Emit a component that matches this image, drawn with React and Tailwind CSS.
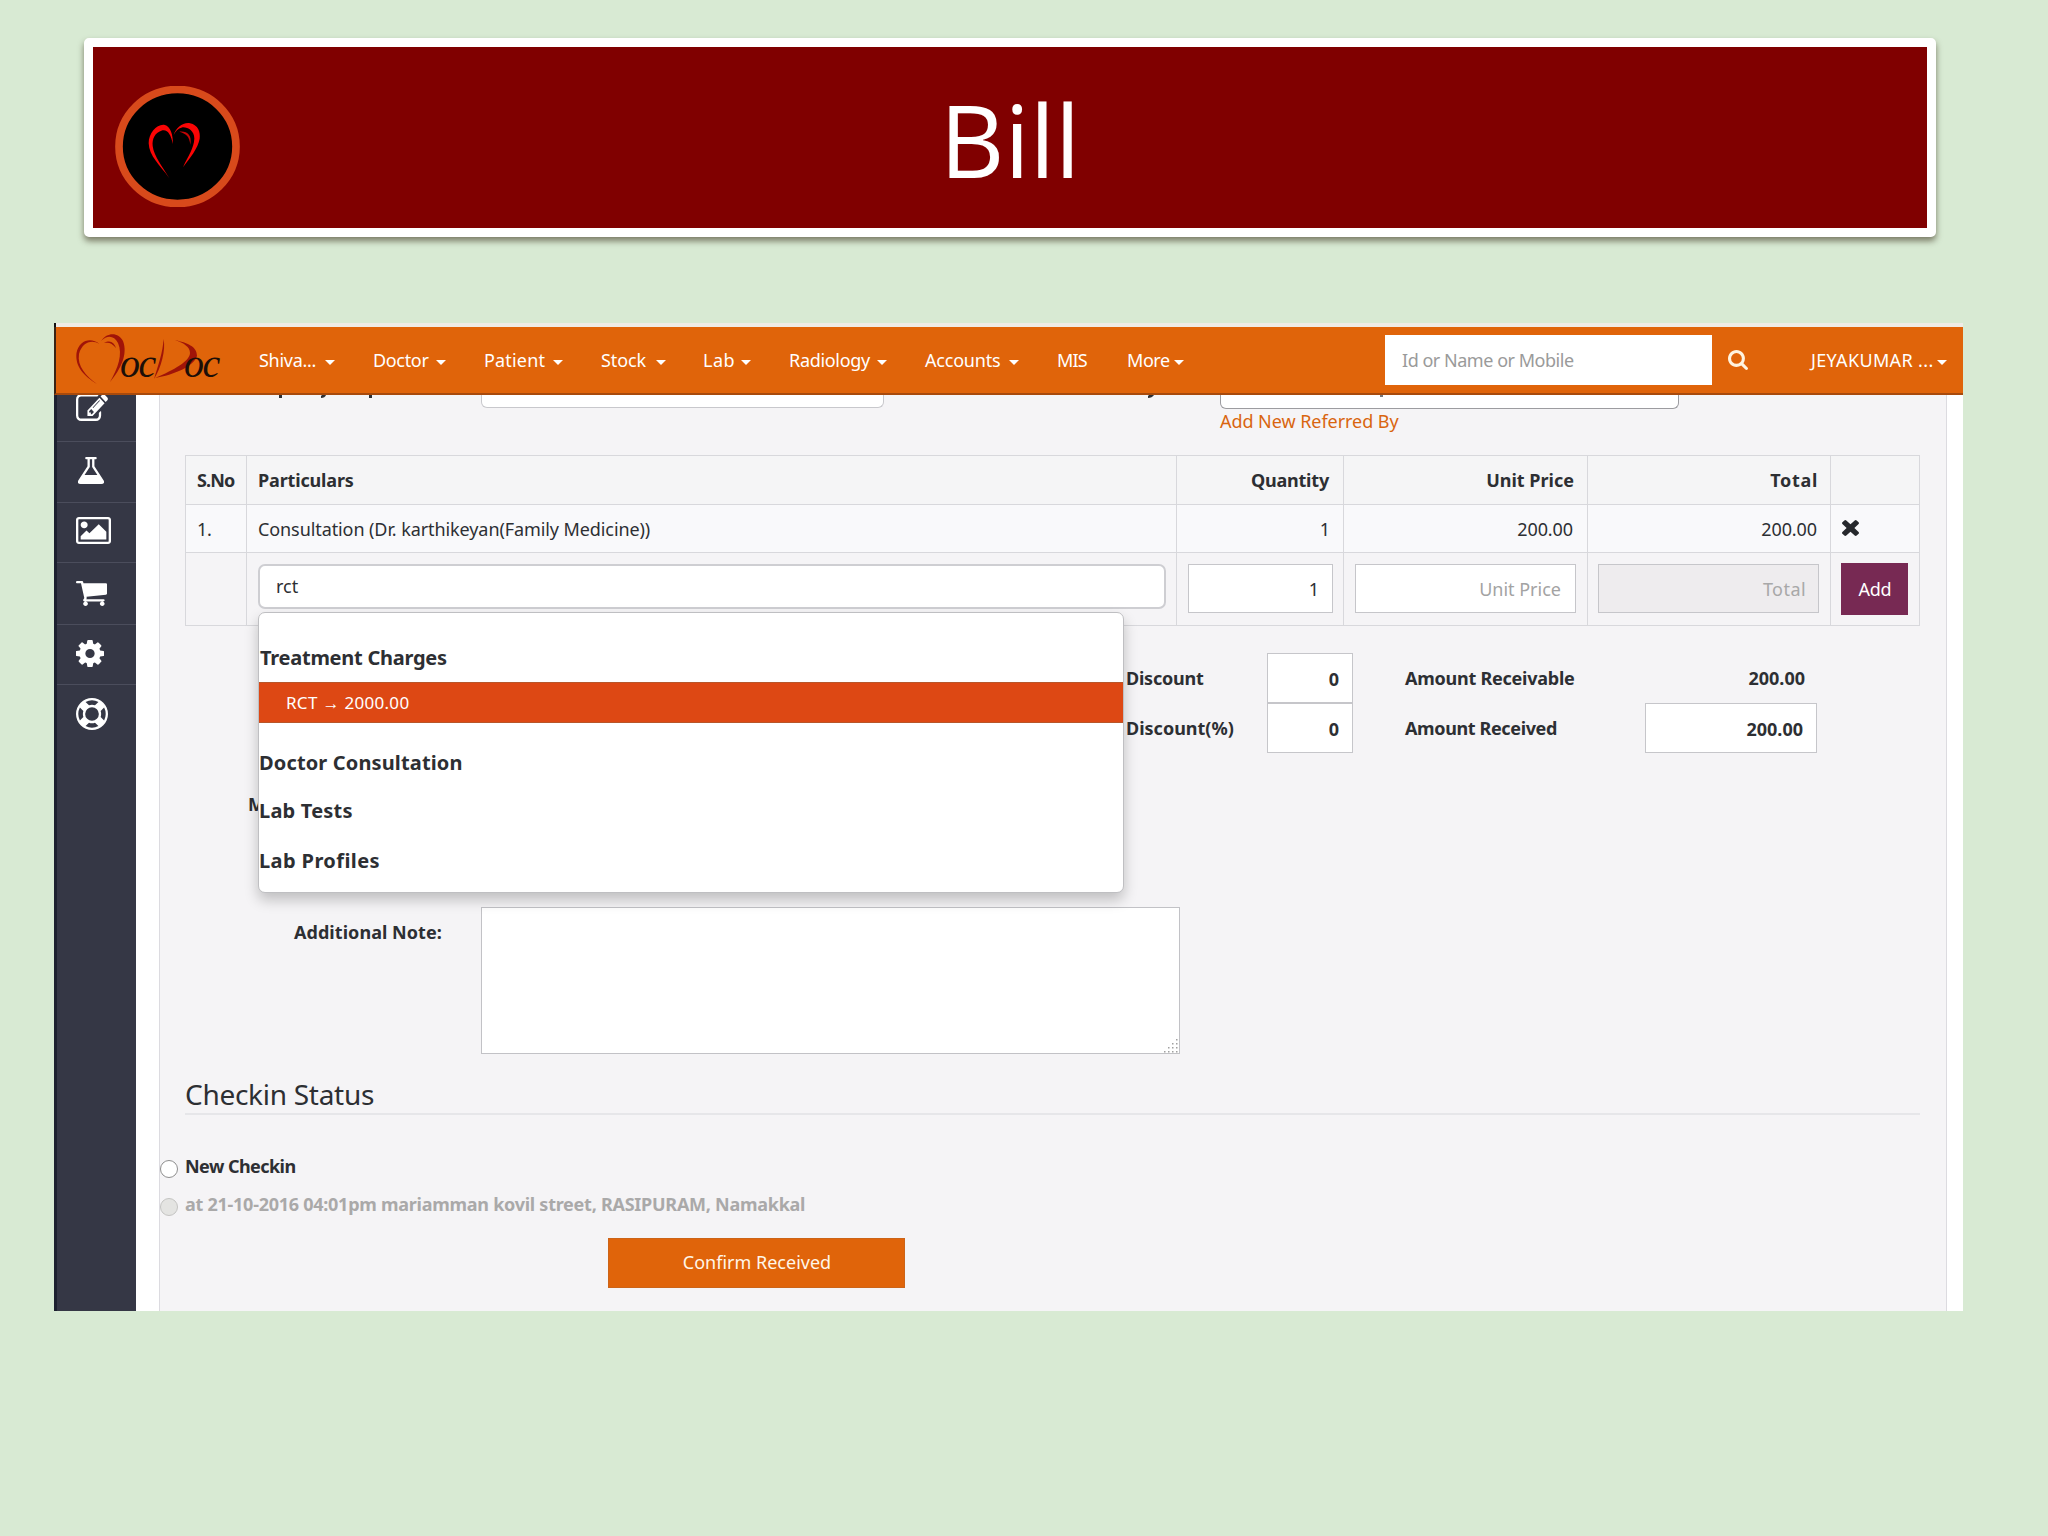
import React, { useState } from 'react';

const navItems = [
    { label: 'Shiva...', box: 'w-[76px] tracking-[-0.29px]', caret: true },
    { label: 'Doctor', box: 'ml-[38px] w-[73px] tracking-[-0.33px]', caret: true },
    { label: 'Patient', box: 'ml-[38px] w-[79px] tracking-[0.17px]', caret: true },
    { label: 'Stock', box: 'ml-[38px] w-[65px] tracking-[-0.1px]', caret: true },
    { label: 'Lab', box: 'ml-[37px] w-[48px] tracking-[0.5px]', caret: true },
    { label: 'Radiology', box: 'ml-[38px] w-[98px] tracking-[-0.31px]', caret: true },
    { label: 'Accounts', box: 'ml-[38px] w-[94px] tracking-[-0.2px]', caret: true },
    { label: 'MIS', box: 'ml-[38px] w-[33px] tracking-[-0.8px]', caret: false },
    { label: 'More', box: 'ml-[37px] w-[57px] tracking-[-0.43px]', caret: true },
];

const sideItems = [
    {
        name: 'edit',
        cell: 'h-[47px] border-b',
        icon: '-mt-[1px] w-[32px] h-[27px]',
        viewBox: '0 128 1792 1408',
        d: 'M888 1184l116-116-152-152-116 116v56h96v96h56zm440-720q-16-16-33 1l-350 350q-17 17-1 33t33-1l350-350q17-17 1-33zm80 594v190q0 119-84.5 203.5t-203.5 84.5h-832q-119 0-203.5-84.5t-84.5-203.5v-832q0-119 84.5-203.5t203.5-84.5h832q63 0 117 25 15 7 18 23 3 17-9 29l-49 49q-14 14-32 8-23-6-45-6h-832q-66 0-113 47t-47 113v832q0 66 47 113t113 47h832q66 0 113-47t47-113v-126q0-13 9-22l64-64q15-15 35-7t20 29zm-96-738l288 288-672 672h-288v-288zm444 132l-92 92-288-288 92-92q28-28 68-28t68 28l152 152q28 28 28 68t-28 68z',
    },
    {
        name: 'lab',
        cell: 'h-[61px] border-b',
        icon: 'mt-[15px] ml-[2px] w-[26px] h-[27px]',
        viewBox: '113 128 1442 1536',
        d: 'M1527 1447q56 89 21.5 153t-140.5 64h-1152q-106 0-140.5-64t21.5-153l503-793v-399h-64q-26 0-45-19t-19-45 19-45 45-19h512q26 0 45 19t19 45-19 45-45 19h-64v399zm-779-725l-272 429h712l-272-429-20-31v-436h-128v436z',
    },
    {
        name: 'images',
        cell: 'h-[60px] border-b',
        icon: 'mt-[14px] w-[35px] h-[27px]',
        viewBox: '-64 128 1920 1536',
        d: 'M576 576q0 80-56 136t-136 56-136-56-56-136 56-136 136-56 136 56 56 136zm1024 384v448h-1408v-192l320-320 160 160 512-512zm96-704h-1600q-13 0-22.5 9.5t-9.5 22.5v1216q0 13 9.5 22.5t22.5 9.5h1600q13 0 22.5-9.5t9.5-22.5v-1216q0-13-9.5-22.5t-22.5-9.5zm160 32v1216q0 66-47 113t-113 47h-1600q-66 0-113-47t-47-113v-1216q0-66 47-113t113-47h1600q66 0 113 47t47 113z',
    },
    {
        name: 'cart',
        cell: 'h-[62px] border-b',
        icon: 'mt-[18px] w-[31px] h-[25px]',
        viewBox: '64 256 1664 1408',
        d: 'M704 1536q0 52-38 90t-90 38-90-38-38-90 38-90 90-38 90 38 38 90zm896 0q0 52-38 90t-90 38-90-38-38-90 38-90 90-38 90 38 38 90zm128-1088v512q0 24-16.5 42.5t-40.5 21.5l-1044 122q13 60 13 70 0 16-24 64h920q26 0 45 19t19 45-19 45-45 19h-1024q-26 0-45-19t-19-45q0-11 8-31.5t16-36 21.5-40 15.5-29.5l-177-823h-204q-26 0-45-19t-19-45 19-45 45-19h256q16 0 28.5 6.5t19.5 15.5 13 24.5 8 26 5.5 29.5 4.5 26h1201q26 0 45 19t19 45z',
    },
    {
        name: 'settings',
        cell: 'h-[60px] border-b',
        icon: 'mt-[15px] w-[28px] h-[27px]',
        viewBox: '0 128 1536 1536',
        d: 'M1024 896q0-106-75-181t-181-75-181 75-75 181 75 181 181 75 181-75 75-181zm512-109v222q0 12-8 23t-20 13l-185 28q-19 54-39 91 35 50 107 138 10 12 10 25t-9 23q-27 37-99 108t-94 71q-12 0-26-9l-138-108q-44 23-91 38-16 136-29 186-7 28-36 28h-222q-14 0-24.5-8.5t-11.5-21.5l-28-184q-49-16-90-37l-141 107q-10 9-25 9-14 0-25-11-126-114-165-168-7-10-7-23 0-12 8-23 15-21 51-66.5t54-70.5q-27-50-41-99l-183-27q-13-2-21-12.5t-8-23.5v-222q0-12 8-23t19-13l186-28q14-46 39-92-40-57-107-138-10-12-10-24 0-10 9-23 26-36 98.5-107.5t94.5-71.5q13 0 26 10l138 107q44-23 91-38 16-136 29-186 7-28 36-28h222q14 0 24.5 8.5t11.5 21.5l28 184q49 16 90 37l142-107q9-9 24-9 13 0 25 10 129 119 165 170 7 8 7 22 0 12-8 23-15 21-51 66.5t-54 70.5q26 50 41 98l183 28q13 2 21 12.5t8 23.5z',
    },
    {
        name: 'help',
        cell: 'grow',
        icon: 'mt-[13px] w-[32px] h-[32px]',
        viewBox: '0 0 1792 1792',
        d: 'M896 0q182 0 348 71t286 191 191 286 71 348-71 348-191 286-286 191-348 71-348-71-286-191-191-286-71-348 71-348 191-286 286-191 348-71zm0 128q-190 0-361 90l194 194q82-28 167-28t167 28l194-194q-171-90-361-90zm-678 1129l194-194q-28-82-28-167t28-167l-194-194q-90 171-90 361t90 361zm678 407q190 0 361-90l-194-194q-82 28-167 28t-167-28l-194 194q171 90 361 90zm0-384q159 0 271.5-112.5t112.5-271.5-112.5-271.5-271.5-112.5-271.5 112.5-112.5 271.5 112.5 271.5 271.5 112.5zm484-217l194 194q90-171 90-361t-90-361l-194 194q28 82 28 167t-28 167z',
    },
];

function Caret() {
    return <span className="mt-[4px] border-x-[5px] border-t-[5px] border-x-transparent border-t-white"></span>;
}

function TitleBanner() {
    return (
        <header className="mt-[38px] ml-[84px] w-[1852px] h-[199px] rounded-[5px] bg-white border-[9px] border-white shadow-[0_4px_6px_rgba(60,50,30,0.6)]">
            <div className="relative h-full bg-[#800000] flex items-center justify-center">
                <svg className="absolute left-[22px] top-[39px] w-[125px] h-[121px]" viewBox="195 197 375 365" preserveAspectRatio="none">
                    <ellipse cx="382.5" cy="379.5" rx="175.5" ry="172" fill="#000" stroke="#d84a1b" strokeWidth="23" />
                    <path fill="#fb0505" d="M358 475C330 436 297 408 296 370C296 338 320 312 342 314C362 318 369 345 369 372C362 342 352 326 334 332C315 338 306 356 308 378C312 410 338 440 358 475Z" />
                    <path fill="#fb0505" d="M371 345C378 322 398 306 420 309C444 314 452 335 449 356C444 385 420 414 399 442C414 408 432 385 433 355C433 332 412 320 396 322C384 325 376 333 371 345Z" />
                    <path fill="#c40404" d="M388 335C410 332 427 345 421 374C418 348 408 341 388 335Z" />
                </svg>
                <h1 className="font-['Open_Sans',sans-serif] text-[100px] leading-none text-white pt-[2px]">Bill</h1>
            </div>
        </header>
    );
}

function Logo() {
    return (
        <div className="relative w-[203px] h-full font-['Liberation_Serif',serif] italic text-[40px] leading-[48px] text-[#1c0f08]">
            <svg className="absolute left-[14px] top-0 w-[160px] h-[66px]" viewBox="70 327 160 66">
                <path fill="#a01408" d="M99.5 344C91 339 82 343 79 354C77 366 86 376 97 384C84 376 75 367 76.500 353C79 340 91 337 99.500 344Z" />
                <path fill="#a01408" d="M101 341C108 331 119 333 123 341C128 354 121 369 110 382C118 368 123 354 118 343C114 335 107 335 101 341Z" />
                <path fill="#a01408" d="M104 343C110 340 114 342 116 348C112 343 109 342 104 343Z" />
                <path fill="#a01408" d="M163.500 339C166 350 161 368 154 379C158 366 163 352 163.500 339Z" />
                <path fill="#a01408" d="M175 340C187 343 197 346 197 356C194 366 174 375 155 378C174 370 190 361 190 353C190 347 184 343 175 340Z" />
            </svg>
            <span className="absolute left-[64px] top-[13px] tracking-[-1.5px]">oc</span>
            <span className="absolute left-[128px] top-[13px] tracking-[-1.5px]">oc</span>
        </div>
    );
}

function NavBar() {
    return (
        <nav className="h-[68px] shrink-0 bg-[#e0640a] border-l-2 border-l-[#3a2415] border-b-2 border-b-[#a84a0c] text-white flex items-center">
            <Logo />
            {navItems.map((item) => (
                <a key={item.label} className={`flex items-center justify-between whitespace-nowrap ${item.box}`}>
                    {item.label}
                    {item.caret && <Caret />}
                </a>
            ))}
            <div className="ml-[201px] w-[327px] h-[50px] bg-white text-[#9a9a9a] pl-[17px] leading-[50px] tracking-[-0.47px]">
                Id or Name or Mobile
            </div>
            <svg className="ml-[16px] w-[20px] h-[20px]" viewBox="64 128 1664 1664" preserveAspectRatio="none" fill="#fff3df">
                <path d="M1216 832q0-185-131.5-316.5t-316.5-131.5-316.5 131.5-131.5 316.5 131.5 316.5 316.5 131.5 316.5-131.5 131.500-316.5zm512 832q0 52-38 90t-90 38q-54 0-90-38l-343-342q-179 124-399 124-143 0-273.5-55.5t-225-150-150-225-55.5-273.5 55.5-273.5 150-225 225-150 273.5-55.5 273.5 55.5 225 150 150 225 55.5 273.5q0 220-124 399l343 343q37 37 37 90z" />
            </svg>
            <a className="ml-[63px] w-[136px] flex items-center justify-between whitespace-nowrap tracking-[0.35px]">
                JEYAKUMAR ...
                <Caret />
            </a>
        </nav>
    );
}

function Sidebar() {
    return (
        <aside className="w-[82px] shrink-0 bg-[#353745] border-l-[3px] border-[#1d2130] flex flex-col overflow-hidden">
            {sideItems.map((item) => (
                <a key={item.name} className={`block pl-[19px] border-[#4b4d5c] ${item.cell}`}>
                    <svg className={item.icon} viewBox={item.viewBox} preserveAspectRatio="none" fill="#fff">
                        <path d={item.d} />
                    </svg>
                </a>
            ))}
        </aside>
    );
}

// lower edge of the row that is scrolled under the nav bar
function ScrolledRow() {
    return (
        <div className="h-[60px] flex items-start">
            <svg className="w-[296px] h-[3px]" viewBox="0 0 296 3" fill="#2d2f33">
                <rect x="94" width="3" height="3" />
                <path d="M137 0h4q-1 3-5 3v-2z" />
                <rect x="184" width="3" height="3" />
            </svg>
            <div className="w-[403px] h-[13px] bg-white border border-t-0 border-[#c8c8cc] rounded-b-[6px]"></div>
            <svg className="w-[336px] h-[3px]" viewBox="0 0 336 3" fill="#2d2f33">
                <path d="M265 0h5q-2 3-6 3v-2z" />
            </svg>
            <div>
                <div className="w-[459px] h-[14px] bg-white border border-t-0 border-[#9c9ca0] rounded-b-[6px]">
                    <div className="ml-[159px] w-[3px] h-[2px] bg-[#77797d]"></div>
                </div>
                <a className="block leading-[25px] text-[#d9650f] tracking-[-0.05px]">Add New Referred By</a>
            </div>
        </div>
    );
}

function Suggestions() {
    return (
        <div className="absolute left-[11px] top-[59px] w-[866px] h-[281px] bg-white border border-[#bfbfc2] rounded-[7px] shadow-[0_7px_14px_rgba(0,0,0,0.22)] z-10 text-[20px] font-bold pt-[22px] leading-[46px]">
            <div className="h-[47px] pl-[1px] tracking-[-0.26px]">Treatment Charges</div>
            <div className="h-[41px] bg-[#dd4814] border-y border-[#b8562a] text-white text-[17px] font-normal leading-[39px] pl-[27px] tracking-[0.3px]">
                RCT → 2000.00
            </div>
            <div className="mt-[17px] tracking-[0.14px]">Doctor Consultation</div>
            <div className="mt-[2px] tracking-[0.21px]">Lab Tests</div>
            <div className="mt-[4px] tracking-[0.4px]">Lab Profiles</div>
        </div>
    );
}

function BillTable() {
    const [query, setQuery] = useState('rct');
    const th = 'border-r border-b border-[#d8d8dc] bg-[#f5f5f6] leading-[48px] font-bold';
    const td = 'border-r border-b border-[#d8d8dc] bg-[#f9f9fb] leading-[48px]';
    const cell = 'border-r border-b border-[#d8d8dc] pt-[11px] flex items-start';
    const field = 'h-[49px] border border-[#c6c6ca] bg-white leading-[49px] text-right';

    return (
        <div className="w-[1735px] border-l border-t border-[#d8d8dc] grid grid-cols-[61px_930px_167px_244px_243px_89px] grid-rows-[49px_48px_73px]">
            <div className={`${th} pl-[11px] tracking-[-0.9px]`}>S.No</div>
            <div className={`${th} pl-[11px] tracking-[-0.16px]`}>Particulars</div>
            <div className={`${th} text-right pr-[14px] tracking-[-0.2px]`}>Quantity</div>
            <div className={`${th} text-right pr-[13px]`}>Unit Price</div>
            <div className={`${th} text-right pr-[12px] tracking-[0.7px]`}>Total</div>
            <div className={th}></div>

            <div className={`${td} pl-[11px] tracking-[-0.3px]`}>1.</div>
            <div className={`${td} pl-[11px] tracking-[-0.09px]`}>Consultation (Dr. karthikeyan(Family Medicine))</div>
            <div className={`${td} text-right pr-[13px]`}>1</div>
            <div className={`${td} text-right pr-[14px] tracking-[-0.1px]`}>200.00</div>
            <div className={`${td} text-right pr-[13px] tracking-[-0.1px]`}>200.00</div>
            <div className={`${td} pl-[11px] pt-[15px]`}>
                <svg className="w-[17px] h-[16px]" viewBox="302 366 1188 1188" preserveAspectRatio="none" fill="#26282c">
                    <path d="M1490 1322q0 40-28 68l-136 136q-28 28-68 28t-68-28l-294-294-294 294q-28 28-68 28t-68-28l-136-136q-28-28-28-68t28-68l294-294-294-294q-28-28-28-68t28-68l136-136q28-28 68-28t68 28l294 294 294-294q28-28 68-28t68 28l136 136q28 28 28 68t-28 68l-294 294 294 294q28 28 28 68z" />
                </svg>
            </div>

            <div className={cell}></div>
            <div className={`${cell} pl-[11px] relative`}>
                <input
                    value={query}
                    onChange={(e) => setQuery(e.target.value)}
                    className="w-[908px] h-[45px] pb-[2px] pl-[16px] bg-white border-2 border-[#ceced2] rounded-[7px] outline-none"
                />
                <Suggestions />
            </div>
            <div className={`${cell} pl-[11px]`}><div className={`${field} w-[145px] pr-[13px]`}>1</div></div>
            <div className={`${cell} pl-[11px]`}><div className={`${field} w-[221px] pr-[14px] text-[#a3a3a3]`}>Unit Price</div></div>
            <div className={`${cell} pl-[10px]`}>
                <div className="w-[221px] h-[49px] border border-[#c6c6ca] bg-[#eeecee] leading-[49px] text-right pr-[12px] text-[#a8a8a8] tracking-[0.44px]">Total</div>
            </div>
            <div className="border-r border-b border-[#d8d8dc] pt-[10px] pl-[10px]">
                <button className="w-[67px] h-[52px] pl-[1px] bg-[#772953] text-white tracking-[-0.29px]">Add</button>
            </div>
        </div>
    );
}

function Totals() {
    const field = 'h-[50px] border border-[#c6c6ca] bg-white text-right pr-[13px]';
    return (
        <div className="mt-[27px] pl-[941px] grid grid-cols-[141px_86px_52px_240px_172px] grid-rows-[50px_50px] leading-[50px] font-bold">
            <div className="tracking-[-0.22px]">Discount</div>
            <div className={field}>0</div>
            <div></div>
            <div className="tracking-[-0.24px]">Amount Receivable</div>
            <div className="text-right pr-[12px]">200.00</div>
            <div>Discount(%)</div>
            <div className={field}>0</div>
            <div></div>
            <div className="tracking-[-0.37px]">Amount Received</div>
            <div className={field}>200.00</div>
        </div>
    );
}

function CheckinStatus() {
    return (
        <section>
            <h2 className="mt-[19px] h-[42px] leading-[42px] border-b-2 border-[#e6e6e9] text-[28px] tracking-[-0.28px]">
                Checkin Status
            </h2>
            <div className="mt-[33px] -ml-[25px] font-bold">
                <label className="flex items-center h-[37px] gap-[7px]">
                    <span className="mt-[5px] size-[18px] rounded-full bg-white border border-[#8e8e8e]"></span>
                    <span className="tracking-[-0.55px]">New Checkin</span>
                </label>
                <label className="flex items-center h-[38px] gap-[7px] text-[#aaa9a9]">
                    <span className="mt-[5px] size-[18px] rounded-full bg-[#e4e4e2] border border-[#c4c4c2]"></span>
                    <span className="tracking-[-0.26px]">at 21-10-2016 04:01pm mariamman kovil street, RASIPURAM, Namakkal</span>
                </label>
            </div>
            <button className="block mt-[15px] ml-[423px] w-[297px] h-[50px] pb-[2px] pl-[1px] bg-[#e0640a] border border-[#cc6418] text-[#fff6e8]">
                Confirm Received
            </button>
        </section>
    );
}

export default function App() {
    return (
        <div className="w-[2048px] h-[1536px] bg-[#d8ead3] flex flex-col items-start overflow-hidden">
            <TitleBanner />
            <div className="mt-[86px] ml-[54px] w-[1909px] h-[988px] flex flex-col bg-white font-['Noto_Sans',sans-serif] text-[18px] text-[#2d2f33] overflow-hidden">
                <div className="h-[4px] shrink-0 bg-[#efece6] border-l-2 border-[#111]"></div>
                <NavBar />
                <div className="flex grow min-h-0">
                    <Sidebar />
                    <main className="ml-[23px] w-[1788px] bg-[#f5f4f6] border-x border-[#dcdbe0] pl-[25px] pr-[26px]">
                        <ScrolledRow />
                        <BillTable />
                        <Totals />
                        {/* label mostly hidden behind the suggestion list */}
                        <div className="mt-[31px] w-[75px] h-[40px] leading-[40px] pl-[63px] font-bold">M</div>
                        <div className="mt-[83px] flex">
                            <label className="w-[296px] pl-[109px] leading-[50px] tracking-[0.05px] font-bold">Additional Note:</label>
                            <div className="w-[699px] h-[147px] bg-white border border-[#c2c2c6] flex items-end justify-end">
                                <svg className="w-[15px] h-[15px]" viewBox="0 0 15 15" fill="#a0a0a0">
                                    <path d="M12 1h1.500v1.500h-1.500zM12 5h1.500v1.500h-1.500zM8 5h1.500v1.500h-1.500zM12 9h1.500v1.500h-1.500zM8 9h1.500v1.500h-1.500zM4 9h1.500v1.500h-1.500zM12 13h1.500v1.500h-1.500zM8 13h1.500v1.500h-1.500zM4 13h1.500v1.500h-1.500zM0 13h1.500v1.500h-1.500z" />
                                </svg>
                            </div>
                        </div>
                        <CheckinStatus />
                    </main>
                </div>
            </div>
        </div>
    );
}
